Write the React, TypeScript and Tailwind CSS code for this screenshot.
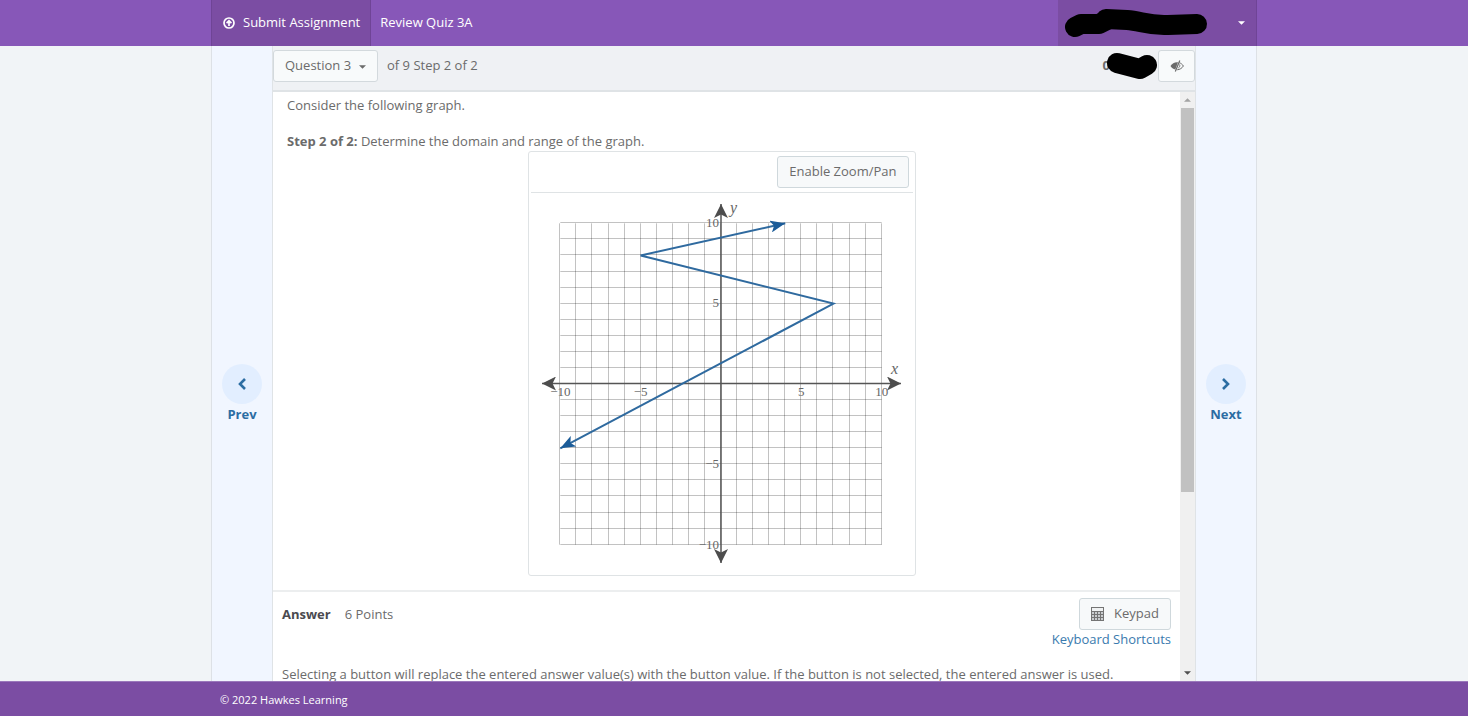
const UNIT = 16.07;
const CENTER_X = 192;
const CENTER_Y = 191;

const TICKS = Array.from({ length: 21 }, (_, i) => i - 10);

const px = (x: number) => CENTER_X + x * UNIT;
const py = (y: number) => CENTER_Y - y * UNIT;

function Caret({ className }: { className: string }) {
  return (
    <svg viewBox="0 0 8 4" className={className} aria-hidden="true">
      <path d="M0 0h8L4 4z" fill="currentColor" />
    </svg>
  );
}

function Chevron({ flipped }: { flipped: boolean }) {
  return (
    <svg viewBox="0 0 12 14" className="h-3.5 w-3" fill="none" stroke="currentColor" strokeWidth="2.6" aria-hidden="true">
      <path d={flipped ? "M3 2l5 5-5 5" : "M9 2L4 7l5 5"} />
    </svg>
  );
}

function SubmitIcon() {
  return (
    <svg viewBox="0 0 12 12" className="size-3" fill="none" stroke="currentColor" aria-hidden="true">
      <circle cx="6" cy="6" r="5" strokeWidth="1.7" />
      <path d="M6 9V4M3.6 6.1 6 3.7l2.4 2.4" strokeWidth="1.7" />
    </svg>
  );
}

function EyeClosedIcon() {
  return (
    <svg viewBox="0 0 14 12" className="h-3 w-3.5" aria-hidden="true">
      <path d="M.5 6C2 3.6 4.3 2.2 7 2.2l1 .1L5.3 9.5C3.2 9 1.5 7.7.5 6z" fill="currentColor" />
      <path d="M9.3 2.7C11 3.3 12.5 4.5 13.4 6 12 8.2 9.8 9.6 7.2 9.8" fill="none" stroke="currentColor" />
      <path d="M9.6 4.5c.5 1.4 0 2.7-1.2 3.500" fill="none" stroke="currentColor" />
      <path d="M9.8.5 5.3 11.5" stroke="currentColor" strokeWidth="1.2" />
    </svg>
  );
}

function CalculatorIcon() {
  return (
    <svg viewBox="0 0 13 14" className="h-3.5 w-[13px]" aria-hidden="true">
      <path d="M0 0h13v14H0z" fill="#747474" />
      <path d="M1 1h11v3H1z" fill="#f0f2f3" />
      {[5, 8, 11].map((y) =>
        [1, 4, 7, 10].map((x) => <rect key={`${x}-${y}`} x={x} y={y} width="2" height="2" fill="#c9cccf" />)
      )}
    </svg>
  );
}

function Graph() {
  return (
    <svg
      viewBox="0 0 386 382"
      className="block w-full"
      role="img"
      aria-label="Piecewise linear graph"
      fontFamily="'Liberation Serif', serif"
      fontSize="13"
      fill="#666"
    >
      <defs>
        <marker id="tip" viewBox="0 0 15 12" refX="15" refY="6" markerWidth="15" markerHeight="12" markerUnits="userSpaceOnUse" orient="auto-start-reverse">
          <path d="M15 6 0 0l3.500 6L0 12z" fill="#1b5c99" />
        </marker>
        <marker id="axisTip" viewBox="0 0 14 14" refX="14" refY="7" markerWidth="14" markerHeight="14" markerUnits="userSpaceOnUse" orient="auto-start-reverse">
          <path d="M14 7 0 0l3.500 7L0 14z" fill="#4d4d4d" />
        </marker>
      </defs>

      {/* Grid */}
      <g stroke="#000" strokeOpacity="0.24">
        {TICKS.map((t) => (
          <path key={t} d={`M${Math.round(px(t)) - 0.5} ${py(10)}V${py(-10)}M${px(-10)} ${Math.round(py(t)) - 0.5}H${px(10)}`} />
        ))}
      </g>

      {/* Tick labels */}
      <g textAnchor="middle">
        <text x={px(-10)} y="203">−10</text>
        <text x={px(-5)} y="203">−5</text>
        <text x={px(5)} y="203">5</text>
        <text x={px(10)} y="203">10</text>
      </g>
      <g textAnchor="end">
        <text x="190" y="34">10</text>
        <text x="190" y="114">5</text>
        <text x="190" y="275">−5</text>
        <text x="190" y="356">−10</text>
      </g>
      <g fontStyle="italic" fontSize="16">
        <text x="201" y="20">y</text>
        <text x="362" y="181">x</text>
      </g>

      {/* Axes */}
      <g stroke="#555" strokeWidth="1.5">
        <path d="M13 190.5H372" markerStart="url(#axisTip)" markerEnd="url(#axisTip)" />
        <path d="M192 11V370" markerStart="url(#axisTip)" markerEnd="url(#axisTip)" />
      </g>

      <path
        d={`M${px(4)} ${py(10)}L${px(-5)} ${py(8)}L${px(7)} ${py(5)}L${px(-10)} ${py(-4)}`}
        fill="none"
        stroke="#2f6a9f"
        strokeWidth="2"
        markerStart="url(#tip)"
        markerEnd="url(#tip)"
      />
    </svg>
  );
}

function SideNav({ label, side }: { label: string; side: "left" | "right" }) {
  return (
    <nav
      className={`flex w-[61px] shrink-0 flex-col items-center justify-center border-[#dde1e6] bg-[#f1f6ff] pt-[60px] ${side === "left" ? "border-l" : "border-r"}`}
    >
      <button className="flex flex-col items-center text-[13px] font-bold text-[#2c6da3]">
        <span className="flex size-10 items-center justify-center rounded-full bg-[#e2eeff]">
          <Chevron flipped={side === "right"} />
        </span>
        <span className="leading-5">{label}</span>
      </button>
    </nav>
  );
}

export default function App() {
  return (
    <div className="flex h-screen flex-col bg-[#f1f4f7] font-['Open_Sans',sans-serif] text-[13px] text-[#6b6b6b]">
      <header className="h-[46px] shrink-0 bg-[#8757b8] text-white">
        <div className="mx-auto flex h-full w-full max-w-[1046px] items-center">
          <button className="flex h-full items-center gap-2 border-x border-[#6f4496] bg-[#7b4da3] pl-[11px] pr-2.5">
            <SubmitIcon />
            Submit Assignment
          </button>
          <h1 className="ml-[9px]">Review Quiz 3A</h1>
          <button className="ml-auto flex h-full w-[199px] items-center justify-between border-r border-[#6f4496] bg-[#7b4da3] pl-1.5 pr-[11px]" aria-label="Account menu">
            <svg viewBox="0 0 144 32" className="h-8 w-36" fill="none" stroke="#000" strokeLinecap="round" strokeLinejoin="round" aria-hidden="true">
              <path d="M11 20 17 17 35 17 43 13" strokeWidth="20" />
              <path d="M42 12 63 13C77 14 84 19 104 18L133 17" strokeWidth="20" />
            </svg>
            <Caret className="h-1 w-[7px]" />
          </button>
        </div>
      </header>

      <div className="mx-auto flex min-h-0 w-full max-w-[1046px] flex-1">
        <SideNav label="Prev" side="left" />

        <main className="flex min-w-0 flex-1 flex-col">
          <div className="flex h-[46px] shrink-0 items-start border-x border-b-2 border-[#dfe3e6] bg-[#eff1f4] pt-1">
            <div className="relative text-[#6b6b6b]">
              <select
                aria-label="Question"
                className="block h-8 w-[105px] appearance-none rounded-[3px] border border-[#d3d9dd] bg-[#f8fafb] pl-[11px]"
              >
                <option>Question 3</option>
              </select>
              <Caret className="pointer-events-none absolute right-3 top-[15px] h-1 w-[7px]" />
            </div>
            <span className="ml-[9px] leading-[30px]">of 9 Step 2 of 2</span>
            <div className="ml-auto flex items-center">
              <span className="font-bold">0</span>
              <svg viewBox="0 0 52 30" className="-ml-1 h-[30px] w-[52px]" fill="none" stroke="#000" strokeLinecap="round" strokeLinejoin="round" aria-hidden="true">
                <path d="M11 12 34 18 41 14" strokeWidth="20" />
              </svg>
              <button aria-label="Hide score" className="flex h-8 w-[37px] items-center justify-center rounded-[3px] border border-[#d3d9dd] bg-[#f8fafb]">
                <EyeClosedIcon />
              </button>
            </div>
          </div>

          <div className="flex min-h-0 flex-1 border-x border-[#dfe3e6] bg-white">
            <div className="min-w-0 flex-1 overflow-hidden">
              <section className="border-b-2 border-[#eceeef] pb-3.5 pl-3.5 pr-6 pt-[3px]">
                <p className="mb-4 leading-5">Consider the following graph.</p>
                <p className="leading-5">
                  <strong>Step 2 of 2:</strong> Determine the domain and range of the graph.
                </p>
                <div className="mx-auto w-[388px] max-w-full rounded-[3px] border border-[#dfe3e5]">
                  <div className="mx-0.5 flex h-[41px] items-center justify-end border-b border-[#dfe3e5] pr-1">
                    <button className="h-8 rounded-[3px] border border-[#cfd8dc] bg-[#f7f9fa] px-[11px]">Enable Zoom/Pan</button>
                  </div>
                  <Graph />
                </div>
              </section>

              <section className="px-[9px] pt-1.5">
                <div className="flex justify-between">
                  <h2 className="leading-8">
                    <strong className="mr-[14px] text-[#4a4a4f]">Answer</strong>6 Points
                  </h2>
                  <div className="flex flex-col items-end">
                    <button className="flex h-8 items-center gap-2.5 rounded-[3px] border border-[#cfd8dc] bg-[#f7f9fa] px-[11px]">
                      <CalculatorIcon />
                      Keypad
                    </button>
                    <a href="#shortcuts" className="leading-[18px] text-[#3a7aae]">Keyboard Shortcuts</a>
                  </div>
                </div>
                <p className="mt-4 whitespace-nowrap leading-5">
                  Selecting a button will replace the entered answer value(s) with the button value. If the button is not selected, the entered answer is used.
                </p>
              </section>
            </div>

            {/* Scroll bar */}
            <div className="flex w-[15px] shrink-0 flex-col items-center bg-[#f0f0f0]" aria-hidden="true">
              <div className="flex h-4 items-center text-[#a3a3a3]">
                <Caret className="h-1 w-[7px] rotate-180" />
              </div>
              <div className="w-full flex-1 px-px">
                <div className="h-[69%] bg-[#c1c1c1]" />
              </div>
              <div className="flex h-4 items-center text-[#505050]">
                <Caret className="h-1 w-[7px]" />
              </div>
            </div>
          </div>
        </main>

        <SideNav label="Next" side="right" />
      </div>

      <footer className="h-[35px] shrink-0 border-t border-[#9a78bb] bg-[#7b4da3] text-[11px] leading-9 text-white">
        <div className="mx-auto max-w-[1046px] pl-[9px]">© 2022 Hawkes Learning</div>
      </footer>
    </div>
  );
}
